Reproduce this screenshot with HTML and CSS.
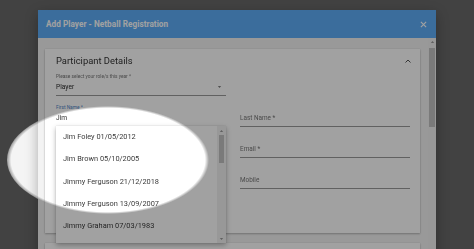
FILE: index.html
```html
<!DOCTYPE html>
<html>
<head>
<meta charset="utf-8">
<title>Add Player</title>
<link rel="stylesheet" href="styles.css">
</head>
<body>
<div class="spot-bg"></div>
<div class="dialog">
  <div class="dlg-head">
    <span class="dlg-title">Add Player - Netball Registration</span>
    <svg class="close" viewBox="0 0 8 8" width="8" height="8"><path d="M1 1L7 7M7 1L1 7" stroke="#fff" stroke-width="1.3" fill="none"/></svg>
  </div>
  <div class="dlg-body">
    <div class="dlg-scroll">
      <section class="card">
        <div class="card-head">
          <span class="card-title">Participant Details</span>
          <svg class="chevron" viewBox="0 0 8 6" width="8" height="6"><path d="M1.5 4.5L4 2L6.5 4.5" stroke="#555" stroke-width="1" fill="none"/></svg>
        </div>
        <div class="grid">
          <div class="field">
            <div class="label">Please select your role/s this year *</div>
            <div class="value select-value"><span>Player</span><svg class="drop" viewBox="0 0 6 4" width="6" height="4"><path d="M1 1L5 1L3 3Z" fill="#555"/></svg></div>
          </div>
          <div class="cell"></div>
          <div class="field focused">
            <div class="label">First Name *</div>
            <div class="value">Jim</div>
          </div>
          <div class="field">
            <div class="label"></div>
            <div class="value placeholder">Last Name *</div>
          </div>
          <div class="field">
            <div class="label"></div>
            <div class="value placeholder"></div>
          </div>
          <div class="field">
            <div class="label"></div>
            <div class="value placeholder">Email *</div>
          </div>
          <div class="field">
            <div class="label"></div>
            <div class="value placeholder"></div>
          </div>
          <div class="field">
            <div class="label"></div>
            <div class="value placeholder">Mobile</div>
          </div>
        </div>
      </section>
      <section class="card card2"></section>
    </div>
    <div class="vscroll">
      <svg class="sb-arrow" viewBox="0 0 6 4" width="6" height="4"><path d="M1 3L5 3L3 1Z" fill="#7a7a7a"/></svg>
      <div class="sb-thumb"></div>
    </div>
  </div>
  <div class="menu">
    <ul class="menu-list">
      <li>Jim Foley 01/05/2012</li>
      <li>Jim Brown 05/10/2005</li>
      <li>Jimmy Ferguson 21/12/2018</li>
      <li>Jimmy Ferguson 13/09/2007</li>
      <li>Jimmy Graham 07/03/1983</li>
    </ul>
    <div class="menu-scroll">
      <svg class="sb-arrow" viewBox="0 0 6 4" width="6" height="4"><path d="M1 3L5 3L3 1Z" fill="#7a7a7a"/></svg>
      <div class="menu-thumb"></div>
      <svg class="sb-arrow down" viewBox="0 0 6 4" width="6" height="4"><path d="M1 1L5 1L3 3Z" fill="#7a7a7a"/></svg>
    </div>
  </div>
</div>
<div class="dim"></div>
</body>
</html>
```
FILE: styles.css
```css
html, body {
  margin: 0;
  padding: 0;
  width: 474px;
  height: 249px;
  overflow: hidden;
}
body {
  background: #696969;
  font-family: Roboto, "Liberation Sans", sans-serif;
  color: #222;
  -webkit-font-smoothing: antialiased;
}
.spot-bg {
  position: absolute;
  left: 7px;
  top: 106px;
  width: 202px;
  height: 108px;
  border-radius: 50%;
  background: #f4f4f4;
}
.dialog {
  position: absolute;
  left: 38px;
  top: 10px;
  width: 398px;
  height: 250px;
  background: #f3f3f3;
  display: flex;
  flex-direction: column;
  box-shadow: 0 4px 12px rgba(0,0,0,.3);
}
.dlg-head {
  height: 28px;
  flex: none;
  background: #5eadf8;
  display: flex;
  align-items: center;
  justify-content: space-between;
  padding: 0 8px 0 8px;
}
.dlg-title {
  color: #fff;
  font-size: 8.2px;
  font-weight: 700;
  letter-spacing: 0.05px;
}
.close {
  display: block;
  width: 7px;
  height: 7px;
  margin-right: 1px;
}
.dlg-body {
  flex: 1;
  display: flex;
  min-height: 0;
}
.dlg-scroll {
  flex: 1;
  padding: 11px 8px 0 7px;
  display: flex;
  flex-direction: column;
  gap: 10px;
}
.card {
  background: #fff;
  padding: 6px 10px 44px 11px;
  box-shadow: 0 1px 2px rgba(0,0,0,.25), 0 0 1px rgba(0,0,0,.15);
}
.card2 {
  padding: 0;
  height: 30px;
}
.card-head {
  height: 12px;
  display: flex;
  align-items: center;
  justify-content: space-between;
}
.card-title {
  font-size: 9.4px;
  line-height: 12px;
  color: #333;
  filter: grayscale(1);
}
.chevron {
  display: block;
  margin-right: -2px;
}
.grid {
  display: grid;
  grid-template-columns: 170px 170px;
  column-gap: 14px;
  row-gap: 2px;
}
.field {
  padding-top: 6px;
  padding-bottom: 3px;
  border-bottom: 1px solid #9a9a9a;
}
.label {
  font-size: 4.8px;
  line-height: 7px;
  height: 7px;
  color: #777;
  white-space: nowrap;
  filter: grayscale(1);
}
.value {
  margin-top: 2px;
  height: 10px;
  font-size: 6.6px;
  line-height: 10px;
  color: #2a2a2a;
  filter: grayscale(1);
}
.placeholder {
  color: #777;
  font-size: 6.4px;
}
.focused .label {
  color: #4f86c8;
  filter: none;
}
.select-value {
  display: flex;
  align-items: center;
  justify-content: space-between;
}
.drop {
  display: block;
  width: 5px;
  height: 4px;
  margin-right: 4px;
}
.vscroll {
  width: 8px;
  flex: none;
  background: #f1f1f1;
  display: flex;
  flex-direction: column;
  align-items: center;
  padding-top: 2px;
}
.sb-arrow {
  display: block;
  width: 5px;
  height: 4px;
}
.sb-thumb {
  margin-top: 4px;
  width: 6px;
  height: 79px;
  background: #c1c1c1;
}
.menu {
  position: absolute;
  left: 18px;
  top: 116px;
  width: 170px;
  height: 117px;
  background: #fff;
  display: flex;
  overflow: hidden;
  filter: grayscale(1);
  box-shadow: 0 2px 5px rgba(0,0,0,.3), 0 0 1px rgba(0,0,0,.2);
}
.menu-list {
  list-style: none;
  margin: 0;
  padding: 0;
  flex: 1;
}
.menu-list li {
  height: 22.3px;
  line-height: 22.3px;
  padding-left: 7px;
  font-size: 7.4px;
  color: #3a3a3a;
  white-space: nowrap;
}
.menu-scroll {
  width: 8px;
  flex: none;
  background: #f1f1f1;
  display: flex;
  flex-direction: column;
  align-items: center;
  padding: 3px 1px 2px 0;
}
.menu-thumb {
  margin-top: 2px;
  width: 5px;
  height: 28px;
  background: #c1c1c1;
}
.menu-scroll .down {
  margin-top: auto;
}
.dim {
  position: fixed;
  left: 0;
  top: 0;
  width: 474px;
  height: 249px;
  pointer-events: none;
  background: radial-gradient(101px 54px at 108px 160px, rgba(0,0,0,0) 96%, rgba(0,0,0,.37) 100%);
}
```
